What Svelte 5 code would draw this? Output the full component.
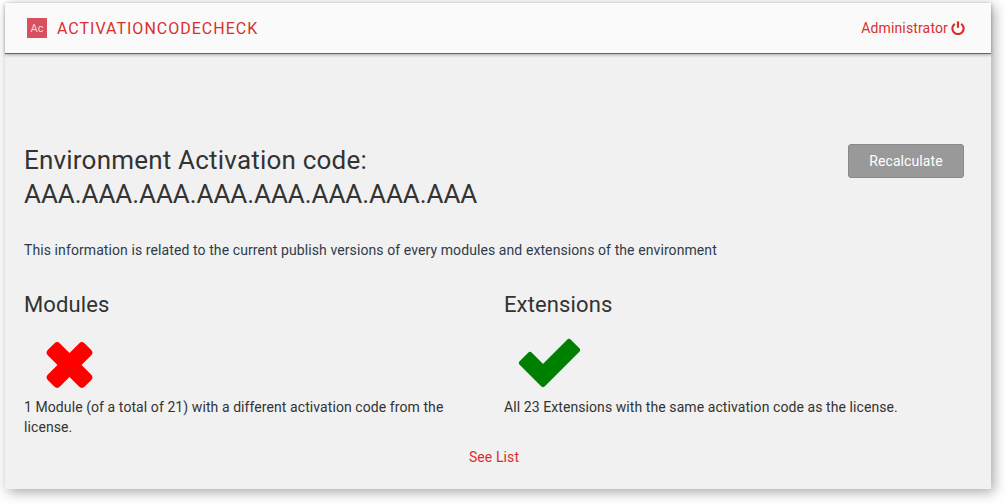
<script>
	const columns = [
		{ title: 'Modules', ok: false, text: '1 Module (of a total of 21) with a different activation code from the license.' },
		{ title: 'Extensions', ok: true, text: 'All 23 Extensions with the same activation code as the license.' }
	];
</script>

<div class="page">
	<div class="window">
		<header class="header">
			<div class="brand">
				<span class="logo">Ac</span>
				<span class="app-name">ACTIVATIONCODECHECK</span>
			</div>
			<div class="user">
				<span>Administrator</span>
				<svg class="power" viewBox="0 0 14 14" width="14" height="14" aria-hidden="true">
					<path d="M3.9 2.8a5.6 5.6 0 1 0 6.2 0" fill="none" stroke="currentColor" stroke-width="2.2" />
					<path d="M7 .4v6.4" fill="none" stroke="currentColor" stroke-width="2.2" />
				</svg>
			</div>
		</header>

		<main class="content">
			<div class="top">
				<h1>
					<span class="code-label">Environment Activation code:</span>
					<span class="code-value">AAA.AAA.AAA.AAA.AAA.AAA.AAA.AAA</span>
				</h1>
				<button class="recalc">Recalculate</button>
			</div>

			<p class="info">This information is related to the current publish versions of every modules and extensions of the environment</p>

			<div class="columns">
				{#each columns as col}
					<section class="col">
						<h2>{col.title}</h2>
						{#if col.ok}
							<svg class="status" viewBox="0 0 80 52" width="80" height="52" aria-hidden="true">
								<path class="check" d="M18 25 L26 17 L39 30 L65 4 L73 12 L39 46 Z" />
							</svg>
						{:else}
							<svg class="status cross-icon" viewBox="0 0 52 52" width="52" height="52" aria-hidden="true">
								<g class="cross">
									<rect x="-0.5" y="18.5" width="52" height="17" rx="4" transform="rotate(45 25.5 27)" />
									<rect x="-0.5" y="18.5" width="52" height="17" rx="4" transform="rotate(-45 25.5 27)" />
								</g>
							</svg>
						{/if}
						<p class="desc">{col.text}</p>
					</section>
				{/each}
			</div>

			<a class="see-list" href="#list">See List</a>
		</main>
	</div>
</div>

<style>
	:global(body) {
		background: #fff;
		font-family: Roboto, "Liberation Sans", sans-serif;
	}

	.page {
		height: 504px;
		box-sizing: border-box;
		padding: 3px 15px 15px 5px;
		overflow: hidden;
	}

	.window {
		height: 486px;
		display: flex;
		flex-direction: column;
		background: #f1f1f1;
		box-shadow: 3px 3px 12px rgba(0, 0, 0, 0.35);
	}

	.header {
		height: 50px;
		flex: none;
		display: flex;
		align-items: center;
		justify-content: space-between;
		padding: 0 26px 0 22px;
		background: #fafafa;
		border-bottom: 1px solid #666;
		box-shadow: 0 1px 3px rgba(0, 0, 0, 0.3);
	}

	.brand {
		display: flex;
		align-items: center;
		gap: 10px;
	}

	.logo {
		width: 20px;
		height: 20px;
		display: flex;
		align-items: center;
		justify-content: center;
		background: #d9505f;
		color: #f5d5d8;
		font-size: 11px;
	}

	.app-name {
		color: #d9302c;
		font-size: 16px;
		letter-spacing: 1px;
	}

	.user {
		display: flex;
		align-items: center;
		gap: 3px;
		color: #d9302c;
		font-size: 14px;
		letter-spacing: 0.15px;
	}

	.power {
		display: block;
	}

	.content {
		flex: 1;
		padding: 89px 27px 0 19px;
		color: #333;
		display: flex;
		flex-direction: column;
	}

	.top {
		display: flex;
		justify-content: space-between;
		align-items: flex-start;
	}

	h1 {
		margin: 0;
		font-size: 26px;
		font-weight: 400;
		line-height: 34px;
	}

	.code-label,
	.code-value {
		display: block;
	}

	.code-label {
		letter-spacing: 0.2px;
	}

	.code-value {
		letter-spacing: -0.06px;
	}

	.recalc {
		width: 116px;
		height: 34px;
		margin-top: 1px;
		border: 1px solid #888;
		border-radius: 3px;
		background: #999;
		color: #fff;
		font: 14px Roboto, sans-serif;
		letter-spacing: 0.1px;
	}

	.info {
		margin: 29px 0 0;
		font-size: 14px;
		line-height: 20px;
		letter-spacing: 0.09px;
		color: #2f3b4a;
	}

	.columns {
		display: grid;
		grid-template-columns: 480px 1fr;
		margin-top: 31px;
	}

	h2 {
		margin: 0;
		font-size: 22px;
		font-weight: 400;
		line-height: 28px;
		letter-spacing: 0.12px;
	}

	.status {
		display: block;
		margin-top: 19px;
	}

	.cross-icon {
		margin-left: 20px;
	}

	.check {
		fill: #008000;
		stroke: #008000;
		stroke-width: 6;
		stroke-linejoin: round;
	}

	.cross {
		fill: #f00;
	}

	.desc {
		margin: 7px 0 0;
		width: 440px;
		font-size: 14px;
		line-height: 20px;
		letter-spacing: 0.08px;
		color: #333;
	}

	.see-list {
		align-self: center;
		margin-top: 10px;
		color: #d9302c;
		font-size: 14px;
		line-height: 20px;
		letter-spacing: 0.1px;
		text-decoration: none;
	}
</style>
